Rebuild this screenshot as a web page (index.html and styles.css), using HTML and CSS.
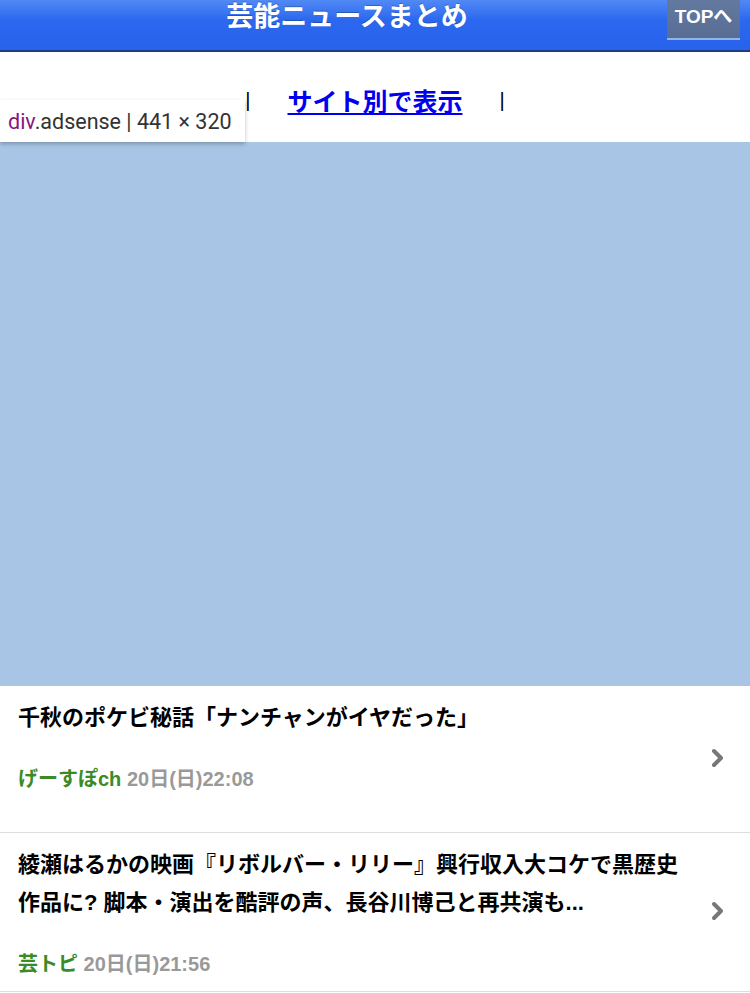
FILE: index.html
```html
<!DOCTYPE html>
<html lang="ja">
<head>
    <meta charset="UTF-8">
    <meta name="viewport" content="width=device-width, initial-scale=1.0">
    <title>芸能ニュースまとめ</title>
    <link rel="stylesheet" href="styles.css">
</head>
<body>
    <header class="site-header">
        <h1 class="site-title">芸能ニュースまとめ</h1>
        <a class="top-btn" href="#">TOPへ</a>
    </header>

    <nav class="view-nav">
        <span class="sep">|</span>
        <a class="view-link" href="#">サイト別で表示</a>
        <span class="sep">|</span>
    </nav>

    <div class="adsense"></div>

    <div class="inspect-tip"><span class="tag">div</span>.adsense | 441 × 320</div>

    <ul class="news-list">
        <li class="news-item">
            <div class="news-body">
                <p class="news-title">千秋のポケビ秘話「ナンチャンがイヤだった」</p>
                <p class="news-meta"><span class="site">げーすぽch</span> <span class="date">20日(日)22:08</span></p>
            </div>
            <svg class="chevron" width="14" height="20" viewBox="0 0 14 20"><polyline points="3,3 10,10 3,17" fill="none" stroke="#777" stroke-width="4" stroke-linecap="round" stroke-linejoin="round"/></svg>
        </li>
        <li class="news-item">
            <div class="news-body">
                <p class="news-title">綾瀬はるかの映画『リボルバー・リリー』興行収入大コケで黒歴史作品に? 脚本・演出を酷評の声、長谷川博己と再共演も...</p>
                <p class="news-meta"><span class="site">芸トピ</span> <span class="date">20日(日)21:56</span></p>
            </div>
            <svg class="chevron" width="14" height="20" viewBox="0 0 14 20"><polyline points="3,3 10,10 3,17" fill="none" stroke="#777" stroke-width="4" stroke-linecap="round" stroke-linejoin="round"/></svg>
        </li>
    </ul>
</body>
</html>
```

FILE: styles.css
```css
body {
    margin: 0;
    font-family: "Liberation Sans", "Noto Sans CJK JP", sans-serif;
    background: #fff;
    overflow: hidden;
}

.site-header {
    position: relative;
    height: 50px;
    background: linear-gradient(180deg, #5189f5 0%, #2c68ef 40%, #2662ea 100%);
    border-bottom: 2px solid #1c3d7e;
}

.site-title {
    margin: 0 56px 0 0;
    text-align: center;
    color: #fff;
    font-size: 27px;
    font-weight: bold;
    line-height: 34px;
    text-shadow: 0 -1px 0 rgba(0, 0, 0, 0.25);
}

.top-btn {
    position: absolute;
    top: 0;
    right: 10px;
    width: 73px;
    height: 38px;
    background: linear-gradient(180deg, #6479a0 0%, #586d94 100%);
    border-bottom: 2px solid #95b4e6;
    color: #fff;
    font-size: 19px;
    font-weight: bold;
    line-height: 34px;
    text-align: center;
    text-decoration: none;
}

.view-nav {
    height: 90px;
    display: flex;
    align-items: center;
    justify-content: center;
    padding-top: 6px;
    box-sizing: border-box;
}

.view-nav .sep {
    font-size: 20px;
    color: #000;
}

.view-link {
    margin: 0 37px;
    font-size: 25px;
    font-weight: bold;
    color: #0000ee;
}

.adsense {
    height: 544px;
    background: #a8c5e5;
}

.inspect-tip {
    position: absolute;
    top: 100px;
    left: 0;
    width: 237px;
    height: 42px;
    padding-left: 8px;
    background: #fff;
    box-shadow: 0 2px 4px rgba(0, 0, 0, 0.25);
    font-family: Roboto, "Liberation Sans", sans-serif;
    font-size: 21.5px;
    line-height: 44px;
    color: #333;
    white-space: nowrap;
}

.inspect-tip .tag {
    color: #881280;
}

.news-list {
    list-style: none;
    margin: 0;
    padding: 0;
}

.news-item {
    display: flex;
    align-items: flex-start;
    min-height: 147px;
    box-sizing: border-box;
    padding: 13px 0 15px 18px;
    border-bottom: 1px solid #ddd;
}

.news-body {
    flex: 1;
}

.news-title {
    margin: 0;
    font-size: 22px;
    font-weight: bold;
    line-height: 38px;
    color: #000;
}

.news-meta {
    margin: 30px 0 0;
    font-size: 20px;
    font-weight: bold;
    line-height: 24px;
}

.news-meta .site {
    color: #3a8b26;
}

.news-meta .date {
    color: #999;
}

.chevron {
    flex: none;
    align-self: center;
    margin: 0 25px 0 23px;
}
```
